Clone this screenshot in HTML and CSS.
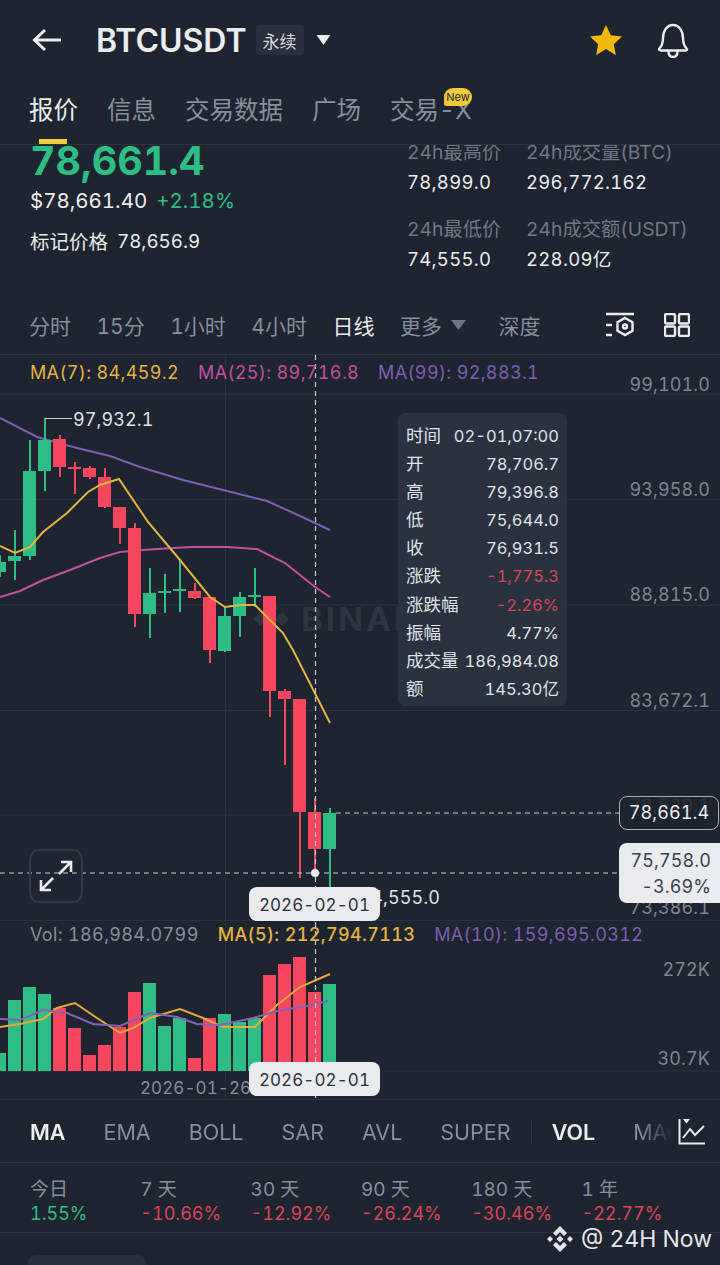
FILE: index.html
```html
<!DOCTYPE html>
<html lang="zh">
<head>
<meta charset="utf-8">
<title>BTCUSDT</title>
<link rel="stylesheet" href="styles.css">
</head>
<body>
<div class="app">
  <header class="topbar">
    <svg class="back" width="30" height="24" viewBox="0 0 30 24"><path d="M29 12H3M13 2 2.500 12 13 22"/></svg>
    <h1 class="symbol">BTCUSDT</h1>
    <span class="chip">永续</span>
    <svg class="caret" width="17" height="12" viewBox="0 0 17 12"><path d="M1.500 1h14L8.500 11z"/></svg>
    <span class="spacer"></span>
    <svg class="star" width="34" height="32" viewBox="0 0 34 32"><path d="M17 1l4.800 10.200 11.200 1.400-8.200 7.700 2.100 11L17 25l-9.900 6.300 2.100-11L1 12.600l11.200-1.400z"/></svg>
    <svg class="bell" width="34" height="36" viewBox="0 0 34 36"><path d="M3 27c3-3 4-6 4-11 0-7 4-13 10-13s10 6 10 13c0 5 1 8 4 11 0 1-1 1.500-2 1.500H5c-1 0-2-.5-2-1.500zM12.500 29c0 4 2 6 4.500 6s4.500-2 4.500-6"/></svg>
  </header>

  <nav class="tabs">
    <a class="tab tab-active">报价</a>
    <a class="tab">信息</a>
    <a class="tab">交易数据</a>
    <a class="tab">广场</a>
    <a class="tab tab-new">交易-X<span class="badge">New</span></a>
  </nav>

  <section class="market">
    <div class="price-col">
      <div class="last-price">78,661.4</div>
      <div class="fiat"><span>$78,661.40</span><span class="pos">+2.18%</span></div>
      <div class="mark"><span>标记价格</span><span class="mark-val">78,656.9</span></div>
    </div>
    <div class="stats">
      <div class="stat"><div class="stat-label">24h最高价</div><div class="stat-value">78,899.0</div></div>
      <div class="stat"><div class="stat-label">24h成交量(BTC)</div><div class="stat-value">296,772.162</div></div>
      <div class="stat"><div class="stat-label">24h最低价</div><div class="stat-value">74,555.0</div></div>
      <div class="stat"><div class="stat-label">24h成交额(USDT)</div><div class="stat-value">228.09亿</div></div>
    </div>
  </section>

  <div class="timeframes">
    <span>分时</span><span>15分</span><span>1小时</span><span>4小时</span><span class="tf-active">日线</span>
    <span class="tf-more">更多<svg width="15" height="10" viewBox="0 0 15 10"><path d="M0 0h15L7.500 10z"/></svg></span>
    <span>深度</span>
    <span class="spacer"></span>
    <svg class="tf-icon" width="30" height="26" viewBox="0 0 30 26"><path d="M1 2h28M1 13h6M1 23h6"/><path d="M20 6l7.500 4.300v8.400L20 23l-7.500-4.300v-8.400z"/><circle cx="20" cy="14.500" r="2"/></svg>
    <svg class="tf-icon" width="26" height="24" viewBox="0 0 26 24"><rect x="1" y="1" width="10" height="9.500" rx="1.500"/><rect x="15" y="1" width="10" height="9.500" rx="1.500"/><rect x="1" y="13.500" width="10" height="9.500" rx="1.500"/><rect x="15" y="13.500" width="10" height="9.500" rx="1.500"/></svg>
  </div>

  <section class="chart">
    <div class="wm"><svg width="44" height="44" viewBox="0 0 44 44"><path d="M22 4l7 7-7 7-7-7zM22 26l7 7-7 7-7-7zM11 15l7 7-7 7-7-7zM33 15l7 7-7 7-7-7zM22 18l4 4-4 4-4-4z"/></svg><span>BINANCE</span></div>
    <svg class="plot" width="720" height="745" viewBox="0 355 720 745">
      <path class="grid" d="M0 394H720M0 499.500H720M0 605H720M0 710.500H720M0 815H720M0 920.500H720M0 1071H720M225.500 355V1100"/>
      <path class="ma99" d="M0 418L37 437 73 447 110 456 140 467 183 480 223 490 267 501 300 516 330 530"/>
      <path class="ma25" d="M0 597L20 591 43 580 70 570 100 558 120 552 143 550 173 548 193 547 227 547 257 549 285 563 315 587 330 597"/>
      <path class="w-g" d="M0 555V577M15 530V580M30 440V560M45 418V491M150 568V638M165 574V613M180 559V612M225 606V652M240 592V637M255 568V607M330 808V888"/>
      <path class="w-r" d="M60 435V477M75 462V494M90 466V479M105 468V508M120 528V544M135 523V627M195 583V599M210 650V663M270 691V717M285 689V765M300 812V878M315 798V873"/>
      <path class="b-g" d="M-7 562h13v10h-13zM8 556h13v5h-13zM23 471h13v85h-13zM38 440h13v31h-13zM143 593h13v21h-13zM158 591h13v2h-13zM173 589h13v2h-13zM218 616h13v35h-13zM233 597h13v19h-13zM248 595h13v2h-13zM323 813h13v36h-13z"/>
      <path class="b-r" d="M53 439h13v28h-13zM68 467h13v2h-13zM83 468h13v9h-13zM98 477h13v30h-13zM113 507h13v21h-13zM128 528h13v86h-13zM188 591h13v7h-13zM203 597h13v53h-13zM263 596h13v95h-13zM278 691h13v8h-13zM293 699h13v113h-13zM308 812h13v37h-13z"/>
      <path class="hi" d="M45 418.500H72"/>
      <path class="ma7" d="M0 546L15 553 30 547 43 532 67 513 88 492 100 485 119 479 148 522 180 560 210 597 225 607 240 605 255 605 283 633 293 650 330 723"/>
      <g class="vol-g"><rect x="-7" y="1053" width="13" height="18"/><rect x="8" y="1000" width="13" height="71"/><rect x="23" y="987" width="13" height="84"/><rect x="38" y="994" width="13" height="77"/><rect x="143" y="983" width="13" height="88"/><rect x="158" y="1026" width="13" height="45"/><rect x="173" y="1018" width="13" height="53"/><rect x="218" y="1014" width="13" height="57"/><rect x="233" y="1022" width="13" height="49"/><rect x="248" y="1018" width="13" height="53"/><rect x="323" y="984" width="13" height="87"/></g>
      <g class="vol-r"><rect x="53" y="1008" width="13" height="63"/><rect x="68" y="1028" width="13" height="43"/><rect x="83" y="1055" width="13" height="16"/><rect x="98" y="1045" width="13" height="26"/><rect x="113" y="1027" width="13" height="44"/><rect x="128" y="992" width="13" height="79"/><rect x="188" y="1058" width="13" height="13"/><rect x="203" y="1018" width="13" height="53"/><rect x="263" y="975" width="13" height="96"/><rect x="278" y="964" width="13" height="107"/><rect x="293" y="957" width="13" height="114"/><rect x="308" y="992" width="13" height="79"/></g>
      <path class="vma5" d="M0 1027L20 1024 43 1019 57 1008 75 1003 97 1018 120 1033 133 1028 150 1018 180 1009 203 1018 223 1027 255 1027 277 1005 300 987 330 974"/>
      <path class="vma10" d="M0 1019L20 1020 43 1010 67 1013 93 1024 120 1026 150 1013 177 1017 197 1024 220 1025 253 1018 277 1011 307 1006 328 1001"/>
      <path class="cross" d="M315.500 355V1100M0 873H620M336 813H620"/>
      <circle class="dot" cx="315" cy="873" r="4"/>
    </svg>

    <div class="legend legend-price"><span class="c-yellow">MA(7): 84,459.2</span><span class="c-pink">MA(25): 89,716.8</span><span class="c-purple">MA(99): 92,883.1</span></div>
    <div class="legend legend-vol"><span class="c-grey">Vol: 186,984.0799</span><span class="c-yellow">MA(5): 212,794.7113</span><span class="c-purple">MA(10): 159,695.0312</span></div>

    <span class="axis a1">99,101.0</span>
    <span class="axis a2">93,958.0</span>
    <span class="axis a3">88,815.0</span>
    <span class="axis a4">83,672.1</span>
    <span class="axis a5">78,529.1</span>
    <span class="axis a6">73,386.1</span>
    <span class="axis a7">272K</span>
    <span class="axis a8">30.7K</span>

    <span class="mark-hi">97,932.1</span>
    <span class="mark-lo">74,555.0</span>
    <span class="date-axis">2026-01-26</span>

    <div class="tip">
      <div class="tip-row"><span>时间</span><span>02-01,07:00</span></div>
      <div class="tip-row"><span>开</span><span>78,706.7</span></div>
      <div class="tip-row"><span>高</span><span>79,396.8</span></div>
      <div class="tip-row"><span>低</span><span>75,644.0</span></div>
      <div class="tip-row"><span>收</span><span>76,931.5</span></div>
      <div class="tip-row"><span>涨跌</span><span class="neg">-1,775.3</span></div>
      <div class="tip-row"><span>涨跌幅</span><span class="neg">-2.26%</span></div>
      <div class="tip-row"><span>振幅</span><span>4.77%</span></div>
      <div class="tip-row"><span>成交量</span><span>186,984.08</span></div>
      <div class="tip-row"><span>额</span><span>145.30亿</span></div>
    </div>

    <div class="last-box">78,661.4</div>
    <div class="cross-box"><span>75,758.0</span><span>-3.69%</span></div>
    <div class="date-box db1">2026-02-01</div>
    <div class="date-box db2">2026-02-01</div>

    <div class="expand"><svg width="38" height="38" viewBox="0 0 38 38"><path d="M22 17L33 6M24 5h10v10M16 21L5 32M14 33H4V23"/></svg></div>
  </section>

  <div class="indicators">
    <div class="ind-scroll">
      <span class="ind-on">MA</span><span>EMA</span><span>BOLL</span><span>SAR</span><span>AVL</span><span>SUPER</span>
      <i class="ind-sep"></i>
      <span class="ind-on">VOL</span><span>MACD</span>
    </div>
    <div class="ind-btn"><svg width="28" height="28" viewBox="0 0 28 28"><path class="tri" d="M5 2h7L8.500 6.500z"/><path d="M1.500 2v24.500H27M5 21l7-9 5 6 9-9"/></svg></div>
  </div>

  <div class="periods">
    <div class="period"><span>今日</span><span class="pos">1.55%</span></div>
    <div class="period"><span>7 天</span><span class="neg">-10.66%</span></div>
    <div class="period"><span>30 天</span><span class="neg">-12.92%</span></div>
    <div class="period"><span>90 天</span><span class="neg">-26.24%</span></div>
    <div class="period"><span>180 天</span><span class="neg">-30.46%</span></div>
    <div class="period"><span>1 年</span><span class="neg">-22.77%</span></div>
  </div>

  <div class="pill"></div>

  <div class="credit"><svg width="28" height="28" viewBox="0 0 28 28"><path d="M14 1l7 7-3 3-4-4-4 4-3-3zM14 27l-7-7 3-3 4 4 4-4 3 3zM1 14l3-3 3 3-3 3zM21 14l3-3 3 3-3 3zM14 10.500l3.500 3.500-3.500 3.500-3.500-3.500z"/></svg><span>@ 24H Now</span></div>
</div>
</body>
</html>
```

FILE: styles.css
```css
* { box-sizing: border-box; }
html, body { margin: 0; padding: 0; background: #1e2430; }
body { font-family: Inter, "Noto Sans CJK SC", sans-serif; font-variant-numeric: tabular-nums; color: #eaecef; }
.app { position: relative; width: 720px; height: 1265px; overflow: hidden; background: #1e2430; }
.spacer { flex: 1; }
.pos { color: #2ebd85; }
.neg { color: #d9435a; }

.topbar { display: flex; align-items: center; height: 80px; padding: 0 30px 0 32px; }
.back { fill: none; stroke: #eaecef; stroke-width: 3; margin-right: 34px; }
.symbol { margin: 0 9px 0 0; font-size: 32px; font-weight: 600; letter-spacing: 0; color: #eaecef; }
.chip { display: flex; align-items: center; justify-content: center; width: 48px; height: 30px; border-radius: 4px; background: #2a303b; font-size: 17px; color: #d5d8dd; }
.caret { fill: #eaecef; margin-left: 11px; }
.star { fill: #f0b90b; margin-right: 33px; }
.bell { fill: none; stroke: #eaecef; stroke-width: 2.4; }

.tabs { display: flex; gap: 29px; height: 65px; padding: 0 0 0 29px; border-bottom: 1px solid #2c333f; font-size: 24.500px; line-height: 60px; color: #848e9c; }
.tab { position: relative; display: block; height: 64px; }
.tab-active { color: #eaecef; }
.tab-active::after { content: ""; position: absolute; left: 10px; bottom: 0; width: 28px; height: 5px; background: #f0cf3a; }
.badge { position: absolute; left: 54px; top: 8px; width: 28px; height: 18px; border-radius: 9px 9px 9px 2px; background: #f0c93a; font-size: 11px; line-height: 18px; text-align: center; color: #1e2430; }

.market { display: flex; height: 161px; overflow: hidden; }
.price-col { width: 407px; padding-left: 30px; }
.last-price { margin-top: -6px; height: 44px; font-size: 39.500px; line-height: 44px; font-weight: 700; color: #2ebd85; }
.fiat { display: flex; gap: 9px; margin-top: 3px; height: 30px; font-size: 20.500px; line-height: 30px; }
.mark { display: flex; gap: 9px; margin-top: 12px; height: 28px; font-size: 19.500px; line-height: 28px; }
.mark-val { font-size: 18.800px; }
.stats { display: grid; grid-template-columns: 119px 1fr; row-gap: 18px; align-content: start; margin-top: -7px; }
.stat-label { height: 28px; font-size: 19.300px; line-height: 28px; color: #6f7784; white-space: nowrap; }
.stat-value { margin-top: 2px; height: 29px; font-size: 18.500px; line-height: 29px; letter-spacing: 0.300px; }

.timeframes { display: flex; align-items: center; gap: 25.500px; height: 49px; padding: 0 30px 10px 29px; border-bottom: 1px solid #2c333f; font-size: 21px; color: #848e9c; }
.tf-active { color: #eaecef; }
.tf-more { display: flex; align-items: center; gap: 9px; padding-right: 7px; }
.tf-more svg { fill: #6f7784; }
.tf-icon { fill: none; stroke: #eaecef; stroke-width: 2.400; margin-left: 4px; }

.chart { position: relative; height: 745px; overflow: hidden; border-bottom: 1px solid #2c333f; }
.plot { position: absolute; left: 0; top: 0; }
.plot path { fill: none; }
.grid { stroke: #2a313c; stroke-width: 1; }
.plot .ma99 { stroke: #7c5fb0; stroke-width: 2; }
.plot .ma25 { stroke: #c2509e; stroke-width: 2; }
.plot .ma7 { stroke: #e3b341; stroke-width: 2; }
.plot .vma5 { stroke: #e8a83a; stroke-width: 2; }
.plot .vma10 { stroke: #8463b5; stroke-width: 2; }
.plot .w-g { stroke: #2ebd85; stroke-width: 2; }
.plot .w-r { stroke: #f6465d; stroke-width: 2; }
.plot .b-g { fill: #2ebd85; }
.plot .b-r { fill: #f6465d; }
.vol-g { fill: #2ebd85; }
.vol-r { fill: #f6465d; }
.plot .hi { stroke: #c8ccd2; stroke-width: 1; }
.plot .cross { stroke: #c4c8cf; stroke-width: 1.200; stroke-dasharray: 5 4; }
.dot { fill: #eaecef; }

.wm { position: absolute; left: 249px; top: 242px; display: flex; align-items: center; gap: 8px; font-size: 33px; font-weight: 700; letter-spacing: 3px; color: #2e3440; }
.wm svg { fill: #2e3440; }

.legend { position: absolute; left: 30px; display: flex; gap: 19px; font-size: 18px; line-height: 24px; letter-spacing: 0.350px; white-space: nowrap; }
.legend-price { top: 6px; }
.legend-vol { top: 568px; }
.legend-vol .c-yellow { font-weight: 500; }
.c-yellow { color: #e3b341; }
.c-pink { color: #c2509e; }
.c-purple { color: #7c5fb0; }
.c-grey { color: #848e9c; }

.axis { position: absolute; right: 10px; font-size: 18px; line-height: 24px; letter-spacing: 0.100px; color: #7d8591; }
.a1 { top: 18px; }
.a2 { top: 123px; }
.a3 { top: 228px; }
.a4 { top: 334px; }
.a5 { top: 439px; }
.a6 { top: 541px; }
.a7 { top: 603px; }
.a8 { top: 692px; }

.mark-hi { position: absolute; left: 73px; top: 53px; font-size: 18px; line-height: 24px; letter-spacing: 0.100px; color: #dfe2e6; }
.mark-lo { position: absolute; right: 280px; top: 531px; font-size: 18px; line-height: 24px; letter-spacing: 0.100px; color: #dfe2e6; }
.date-axis { position: absolute; left: 140px; top: 721px; font-size: 17px; line-height: 24px; letter-spacing: 0.100px; color: #848e9c; }

.tip { position: absolute; left: 398px; top: 58px; width: 169px; height: 293px; padding: 9px 8px; border-radius: 7px; background: #2a323f; font-size: 17.500px; line-height: 28.100px; color: #dfe2e6; }
.tip-row { display: flex; justify-content: space-between; white-space: nowrap; }
.tip-row span:last-child { font-size: 16.500px; }

.last-box { position: absolute; left: 619px; top: 441px; width: 100px; height: 34px; border: 1px solid #a9aeb6; border-radius: 8px; background: rgba(30, 36, 48, 0.88); font-size: 18px; line-height: 32px; letter-spacing: 0.100px; text-align: center; color: #eaecef; }
.cross-box { position: absolute; left: 619px; top: 488px; display: flex; flex-direction: column; align-items: flex-end; width: 101px; height: 60px; padding: 5px 9px 0 0; border-radius: 8px 0 0 8px; background: #e9ebee; font-size: 18px; line-height: 26px; letter-spacing: 0.100px; color: #3a4250; }
.date-box { position: absolute; left: 249px; width: 131px; height: 34px; border-radius: 8px; background: #e9ebee; font-size: 17px; line-height: 36px; letter-spacing: 0.100px; text-align: center; color: #2b3240; }
.db1 { top: 532px; }
.db2 { top: 707px; }

.expand { position: absolute; left: 29px; top: 494px; display: flex; align-items: center; justify-content: center; width: 54px; height: 54px; border: 2px solid #333a47; border-radius: 10px; }
.expand svg { fill: none; stroke: #eaecef; stroke-width: 2.600; }

.indicators { position: relative; height: 63px; border-bottom: 1px solid #2c333f; }
.ind-scroll { display: flex; align-items: center; gap: 38px; height: 62px; padding: 2px 0 0 30px; overflow: hidden; width: 672px; font-size: 21.500px; color: #848e9c; white-space: nowrap; -webkit-mask-image: linear-gradient(to right, #000 640px, transparent 672px); mask-image: linear-gradient(to right, #000 640px, transparent 672px); }
.ind-on { color: #eaecef; font-weight: 600; }
.ind-sep { flex: none; width: 1px; height: 24px; margin: 0 -18px; background: #2c333f; }
.ind-btn { position: absolute; right: 14px; top: 17px; display: flex; }
.ind-btn svg { fill: none; stroke: #eaecef; stroke-width: 2; }
.ind-btn .tri { fill: #eaecef; stroke: none; }

.periods { display: grid; grid-template-columns: repeat(6, 110.300px); height: 70px; padding: 15px 0 0 30px; border-bottom: 1px solid #2c333f; }
.period { display: flex; flex-direction: column; font-size: 19px; line-height: 24px; color: #848e9c; }
.period span:last-child { font-size: 18px; }

.pill { width: 118px; height: 30px; margin: 22px 0 0 28px; border-radius: 8px 8px 0 0; background: #282e3a; }

.credit { position: absolute; right: 8px; top: 1225px; display: flex; align-items: center; gap: 7px; font-size: 23px; line-height: 28px; color: #e4e6ea; }
.credit svg { fill: #e4e6ea; }
```
